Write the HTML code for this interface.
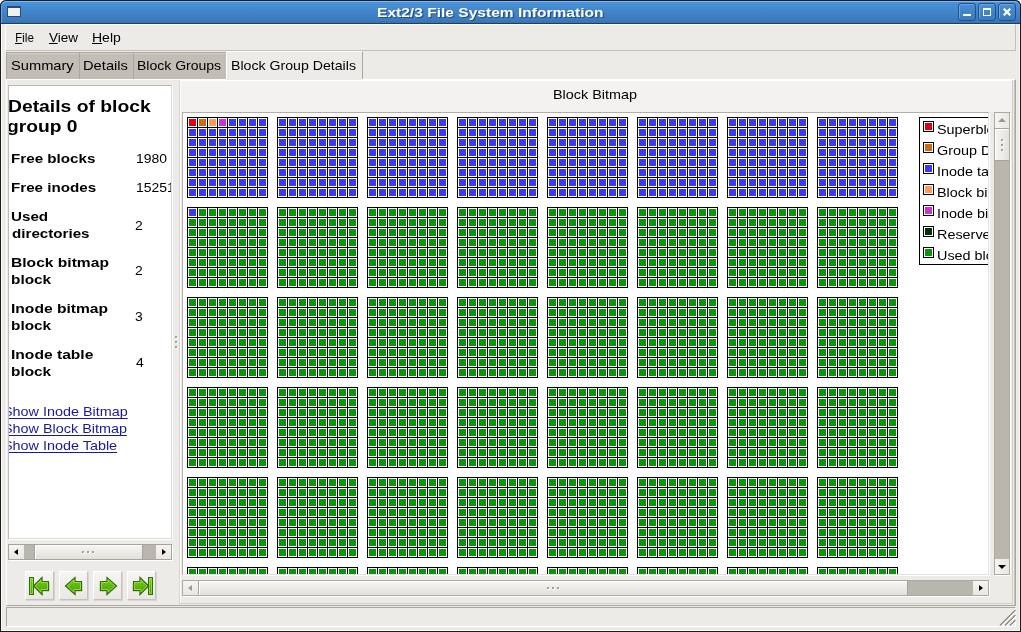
<!DOCTYPE html>
<html><head><meta charset="utf-8"><style>
*{margin:0;padding:0;box-sizing:border-box}
html,body{width:1021px;height:632px;overflow:hidden;background:#fff}
body{position:relative;font-family:"Liberation Sans",sans-serif;font-size:13px;color:#000}
.a{position:absolute}
.t{position:absolute;white-space:nowrap;line-height:1;transform-origin:0 0;will-change:transform}
u{text-decoration:underline;text-decoration-skip-ink:none}
.btn{position:absolute;width:29px;height:29px;background:linear-gradient(#f6f5f3,#e9e7e3);border:1px solid #c6c2bb;border-top-color:#fff;border-left-color:#fff;box-shadow:1px 1px 0 #d8d5cf}
.arr{position:absolute;width:0;height:0;border-style:solid;border-color:transparent}
.dot{position:absolute;width:2px;height:2px;background:#a4a098;box-shadow:1px 1px 0 #fff}
</style></head><body>
<!-- window body -->
<div class="a" style="left:0px;top:0px;width:1021px;height:632px;background:#edebe7;border-left:1px solid #1c1c1c;border-right:1px solid #1c1c1c;border-bottom:1px solid #1c1c1c;border-radius:6px 6px 0 0"></div>
<div class="a" style="left:1px;top:24px;width:1px;height:607px;background:#fbfaf9"></div>
<div class="a" style="left:1019px;top:24px;width:1px;height:607px;background:#f7f6f4"></div>
<div class="a" style="left:1px;top:630px;width:1019px;height:1px;background:#fbfaf9"></div>
<!-- title bar -->
<div class="a" style="left:0px;top:0px;width:1021px;height:24px;background:linear-gradient(#4b95dc,#4286ca 45%,#3b79bc 90%,#3a70ad);border:1px solid #0e1f38;border-bottom-color:#1f3d66;border-radius:6px 6px 0 0;box-shadow:inset 0 1px 0 #8cb4e2,inset 1px 0 0 #6ea3dc"></div>
<div class="a" style="left:7px;top:6px;width:14px;height:11px;background:#f2f0ec;border:1px solid #2a4a74;border-top-width:2px"></div>
<div class="t" style="left:376.80px;top:6px;font-size:13px;font-weight:bold;color:#fff;transform:scaleX(1.1968);text-shadow:1px 1px 0 rgba(15,35,70,0.55)">Ext2/3 File System Information</div>
<div class="a" style="left:958px;top:3px;width:18px;height:18px;border:1px solid #234f86;border-radius:3px;box-shadow:inset 1px 1px 0 #6fa5e0"></div>
<div class="a" style="left:963px;top:14px;width:8px;height:2px;background:#fff"></div>
<div class="a" style="left:978px;top:3px;width:18px;height:18px;border:1px solid #234f86;border-radius:3px;box-shadow:inset 1px 1px 0 #6fa5e0"></div>
<div class="a" style="left:983px;top:8px;width:8px;height:8px;border:1px solid #fff;border-top-width:2px"></div>
<div class="a" style="left:998px;top:3px;width:18px;height:18px;border:1px solid #234f86;border-radius:3px;box-shadow:inset 1px 1px 0 #6fa5e0"></div>
<svg class="a" style="left:1003px;top:8px" width="8" height="8"><path d="M0.7 0.7L7.3 7.3M7.3 0.7L0.7 7.3" stroke="#fff" stroke-width="2.2"/></svg>
<!-- menubar -->
<div class="a" style="left:5px;top:24px;width:1011px;height:27px;border-top:1px solid #fff;border-left:1px solid #fff;border-right:1px solid #c4c0b9;border-bottom:1px solid #c4c0b9"></div>
<div class="t" style="left:15.00px;top:31px;font-size:13px;color:#000;transform:scaleX(0.9048);"><u>F</u>ile</div><div class="t" style="left:49.00px;top:31px;font-size:13px;color:#000;transform:scaleX(1.0357);"><u>V</u>iew</div><div class="t" style="left:92.00px;top:31px;font-size:13px;color:#000;transform:scaleX(1.0769);"><u>H</u>elp</div>
<!-- tabs -->
<div class="a" style="left:6px;top:52px;width:74px;height:27px;background:#c2beb6;border:1px solid #aba79f;border-bottom:none;box-shadow:inset 0 1px 0 #d3d0ca"></div>
<div class="a" style="left:79px;top:52px;width:55px;height:27px;background:#c2beb6;border:1px solid #aba79f;border-bottom:none;box-shadow:inset 0 1px 0 #d3d0ca"></div>
<div class="a" style="left:133px;top:52px;width:94px;height:27px;background:#c2beb6;border:1px solid #aba79f;border-bottom:none;box-shadow:inset 0 1px 0 #d3d0ca"></div>
<div class="a" style="left:226px;top:51px;width:137px;height:29px;background:#edebe7;border-right:1px solid #aba79f;border-top:1px solid #fff;border-left:1px solid #fff"></div>
<div class="t" style="left:10.87px;top:59px;font-size:13px;color:#000;transform:scaleX(1.1273);">Summary</div><div class="t" style="left:82.87px;top:59px;font-size:13px;color:#000;transform:scaleX(1.1316);">Details</div><div class="t" style="left:136.92px;top:59px;font-size:13px;color:#000;transform:scaleX(1.0779);">Block Groups</div><div class="t" style="left:230.91px;top:59px;font-size:13px;color:#000;transform:scaleX(1.0877);">Block Group Details</div>
<!-- notebook page -->
<div class="a" style="left:6px;top:79px;width:1010px;height:527px;border-top:1px solid #fff;border-left:1px solid #fff;border-right:1px solid #aba79f;border-bottom:1px solid #aba79f"></div>
<div class="a" style="left:227px;top:79px;width:135px;height:1px;background:#edebe7"></div>
<!-- left pane white box -->
<div class="a" style="left:8px;top:85px;width:164px;height:454px;background:#fff;border:1px solid #bfbbb4;border-right-color:#dedbd6;border-bottom-color:#dedbd6;box-shadow:1px 1px 0 #fff"></div>
<div class="a" style="left:9px;top:86px;width:162px;height:452px;overflow:hidden">
<div class="t" style="left:-1.14px;top:12px;font-size:17px;font-weight:bold;color:#000;transform:scaleX(1.1360);">Details of block</div><div class="t" style="left:-2.13px;top:32px;font-size:17px;font-weight:bold;color:#000;transform:scaleX(1.1311);">group 0</div><div class="t" style="left:1.83px;top:66px;font-size:13px;font-weight:bold;color:#000;transform:scaleX(1.1690);">Free blocks</div><div class="t" style="left:126.93px;top:66px;font-size:13px;color:#000;transform:scaleX(1.0714);">1980</div><div class="t" style="left:1.83px;top:95px;font-size:13px;font-weight:bold;color:#000;transform:scaleX(1.1667);">Free inodes</div><div class="t" style="left:126.93px;top:95px;font-size:13px;color:#000;transform:scaleX(1.0714);">15251</div><div class="t" style="left:1.83px;top:124px;font-size:13px;font-weight:bold;color:#000;transform:scaleX(1.1667);">Used</div><div class="t" style="left:3.00px;top:141px;font-size:13px;font-weight:bold;color:#000;transform:scaleX(1.1667);">directories</div><div class="t" style="left:125.93px;top:133px;font-size:13px;color:#000;transform:scaleX(1.0714);">2</div><div class="t" style="left:1.80px;top:170px;font-size:13px;font-weight:bold;color:#000;transform:scaleX(1.2000);">Block bitmap</div><div class="t" style="left:1.82px;top:187px;font-size:13px;font-weight:bold;color:#000;transform:scaleX(1.1818);">block</div><div class="t" style="left:125.93px;top:178px;font-size:13px;color:#000;transform:scaleX(1.0714);">2</div><div class="t" style="left:1.80px;top:216px;font-size:13px;font-weight:bold;color:#000;transform:scaleX(1.2000);">Inode bitmap</div><div class="t" style="left:1.82px;top:233px;font-size:13px;font-weight:bold;color:#000;transform:scaleX(1.1818);">block</div><div class="t" style="left:125.93px;top:224px;font-size:13px;color:#000;transform:scaleX(1.0714);">3</div><div class="t" style="left:1.80px;top:262px;font-size:13px;font-weight:bold;color:#000;transform:scaleX(1.2000);">Inode table</div><div class="t" style="left:1.82px;top:279px;font-size:13px;font-weight:bold;color:#000;transform:scaleX(1.1818);">block</div><div class="t" style="left:127.00px;top:270px;font-size:13px;color:#000;transform:scaleX(1.0714);">4</div><div class="t" style="left:-6.00px;top:319px;font-size:13px;color:#1a1a98;transform:scaleX(1.1062);text-underline-offset:1.6px"><u>Show Inode Bitmap</u></div><div class="t" style="left:-6.00px;top:336px;font-size:13px;color:#1a1a98;transform:scaleX(1.1062);text-underline-offset:1.6px"><u>Show Block Bitmap</u></div><div class="t" style="left:-6.00px;top:353px;font-size:13px;color:#1a1a98;transform:scaleX(1.1062);text-underline-offset:1.6px"><u>Show Inode Table</u></div>
</div>
<!-- left h scrollbar -->
<div class="a" style="left:8px;top:544px;width:164px;height:16px;background:#b9b6ad;border:1px solid #a8a49b;box-shadow:1px 1px 0 #fff"></div>
<div class="a" style="left:9px;top:545px;width:15px;height:14px;background:linear-gradient(#f6f5f3,#e9e7e3)"></div>
<div class="arr" style="left:14px;top:549px;border-width:3.5px 4px 3.5px 0;border-right-color:#000"></div>
<div class="a" style="left:34px;top:545px;width:109px;height:14px;background:linear-gradient(#f7f6f4,#e4e1dc);border-left:1px solid #a8a49b;border-right:1px solid #a8a49b;box-shadow:inset 1px 1px 0 #fff"></div>
<div class="dot" style="left:82px;top:551px"></div><div class="dot" style="left:87px;top:551px"></div><div class="dot" style="left:92px;top:551px"></div>
<div class="a" style="left:156px;top:545px;width:15px;height:14px;background:linear-gradient(#f6f5f3,#e9e7e3)"></div>
<div class="arr" style="left:162px;top:549px;border-width:3.5px 0 3.5px 4px;border-left-color:#000"></div>
<!-- nav buttons -->
<div class="btn" style="left:25px;top:571px"><svg width="28" height="28" style="position:absolute;left:0;top:0"><defs><linearGradient id="ga" x1="0" y1="0" x2="0" y2="1"><stop offset="0" stop-color="#73d216"/><stop offset="1" stop-color="#4e9a06"/></linearGradient></defs><path d="M7.5 14 L16 5.5 L16 9.5 L22.5 9.5 L22.5 18.5 L16 18.5 L16 22.5 Z" fill="rgba(0,0,0,0.12)" transform="translate(1,1.5)"/><rect x="3.5" y="5.5" width="4" height="17" fill="url(#ga)" stroke="#336b10" stroke-width="1"/><rect x="4.5" y="6.5" width="2" height="15" fill="none" stroke="#9be44d" stroke-width="0.8"/><path d="M7.5 14 L16 5.5 L16 9.5 L22.5 9.5 L22.5 18.5 L16 18.5 L16 22.5 Z" fill="url(#ga)" stroke="#336b10" stroke-width="1.2" stroke-linejoin="miter"/><path d="M9.2 14 L15 7.8 L15 10.5 L21.5 10.5 L21.5 17.5 L15 17.5 L15 20.2 Z" fill="none" stroke="#9be44d" stroke-width="0.9" opacity="0.9"/></svg></div>
<div class="btn" style="left:59px;top:571px"><svg width="28" height="28" style="position:absolute;left:0;top:0"><defs><linearGradient id="ga" x1="0" y1="0" x2="0" y2="1"><stop offset="0" stop-color="#73d216"/><stop offset="1" stop-color="#4e9a06"/></linearGradient></defs><path d="M5.5 14 L15 5.5 L15 9.5 L21.5 9.5 L21.5 18.5 L15 18.5 L15 22.5 Z" fill="rgba(0,0,0,0.12)" transform="translate(1,1.5)"/><path d="M5.5 14 L15 5.5 L15 9.5 L21.5 9.5 L21.5 18.5 L15 18.5 L15 22.5 Z" fill="url(#ga)" stroke="#336b10" stroke-width="1.2" stroke-linejoin="miter"/><path d="M7.2 14 L14 7.8 L14 10.5 L20.5 10.5 L20.5 17.5 L14 17.5 L14 20.2 Z" fill="none" stroke="#9be44d" stroke-width="0.9" opacity="0.9"/></svg></div>
<div class="btn" style="left:93px;top:571px"><div style="position:absolute;left:0;top:0;width:28px;height:28px;transform:scaleX(-1)"><svg width="28" height="28" style="position:absolute;left:0;top:0"><defs><linearGradient id="ga" x1="0" y1="0" x2="0" y2="1"><stop offset="0" stop-color="#73d216"/><stop offset="1" stop-color="#4e9a06"/></linearGradient></defs><path d="M5.5 14 L15 5.5 L15 9.5 L21.5 9.5 L21.5 18.5 L15 18.5 L15 22.5 Z" fill="rgba(0,0,0,0.12)" transform="translate(1,1.5)"/><path d="M5.5 14 L15 5.5 L15 9.5 L21.5 9.5 L21.5 18.5 L15 18.5 L15 22.5 Z" fill="url(#ga)" stroke="#336b10" stroke-width="1.2" stroke-linejoin="miter"/><path d="M7.2 14 L14 7.8 L14 10.5 L20.5 10.5 L20.5 17.5 L14 17.5 L14 20.2 Z" fill="none" stroke="#9be44d" stroke-width="0.9" opacity="0.9"/></svg></div></div>
<div class="btn" style="left:127px;top:571px"><div style="position:absolute;left:0;top:0;width:28px;height:28px;transform:scaleX(-1)"><svg width="28" height="28" style="position:absolute;left:0;top:0"><defs><linearGradient id="ga" x1="0" y1="0" x2="0" y2="1"><stop offset="0" stop-color="#73d216"/><stop offset="1" stop-color="#4e9a06"/></linearGradient></defs><path d="M7.5 14 L16 5.5 L16 9.5 L22.5 9.5 L22.5 18.5 L16 18.5 L16 22.5 Z" fill="rgba(0,0,0,0.12)" transform="translate(1,1.5)"/><rect x="3.5" y="5.5" width="4" height="17" fill="url(#ga)" stroke="#336b10" stroke-width="1"/><rect x="4.5" y="6.5" width="2" height="15" fill="none" stroke="#9be44d" stroke-width="0.8"/><path d="M7.5 14 L16 5.5 L16 9.5 L22.5 9.5 L22.5 18.5 L16 18.5 L16 22.5 Z" fill="url(#ga)" stroke="#336b10" stroke-width="1.2" stroke-linejoin="miter"/><path d="M9.2 14 L15 7.8 L15 10.5 L21.5 10.5 L21.5 17.5 L15 17.5 L15 20.2 Z" fill="none" stroke="#9be44d" stroke-width="0.9" opacity="0.9"/></svg></div></div>
<!-- paned handle -->
<div class="dot" style="left:175px;top:336px"></div><div class="dot" style="left:175px;top:341px"></div><div class="dot" style="left:175px;top:346px"></div>
<!-- right pane frame -->
<div class="a" style="left:179px;top:80px;width:834px;height:524px;background:#edebe7;border-left:1px solid #d8d5d0;border-top:1px solid #fff;border-bottom:1px solid #d2cec8;box-shadow:inset 1px 0 0 #fff"></div>
<div class="a" style="left:181px;top:81px;width:831px;height:31px;background:#f3f2f0"></div>
<div class="a" style="left:1012px;top:80px;width:1px;height:524px;background:#d2cec8"></div>
<div class="a" style="left:1014px;top:80px;width:1px;height:525px;background:#c6c2ba"></div>
<div class="t" style="left:552.89px;top:88px;font-size:13px;color:#000;transform:scaleX(1.1067);">Block Bitmap</div>
<div class="a" style="left:182px;top:112px;width:807px;height:463px;border:1px solid #b4b0a8;border-right-color:#e4e2de;border-bottom-color:#e4e2de;background:#fff;box-shadow:1px 1px 0 #fff"></div>
<div class="a" style="left:183px;top:113px;width:805px;height:461px;overflow:hidden;background:#fff"><svg width="805" height="462" style="position:absolute;left:0;top:0" shape-rendering="crispEdges"><defs><pattern id="pb" x="4" y="4" width="10" height="10" patternUnits="userSpaceOnUse"><rect width="10" height="10" fill="#000"/><rect x="1" y="1" width="9" height="9" fill="#fff"/><rect x="2" y="2" width="7" height="7" fill="#3a3af0"/></pattern><pattern id="pg" x="4" y="4" width="10" height="10" patternUnits="userSpaceOnUse"><rect width="10" height="10" fill="#000"/><rect x="1" y="1" width="9" height="9" fill="#fff"/><rect x="2" y="2" width="7" height="7" fill="#0a960a"/></pattern></defs><rect x="4" y="4" width="81" height="81" fill="#000"/><rect x="4" y="4" width="80" height="80" fill="url(#pb)"/><rect x="94" y="4" width="81" height="81" fill="#000"/><rect x="94" y="4" width="80" height="80" fill="url(#pb)"/><rect x="184" y="4" width="81" height="81" fill="#000"/><rect x="184" y="4" width="80" height="80" fill="url(#pb)"/><rect x="274" y="4" width="81" height="81" fill="#000"/><rect x="274" y="4" width="80" height="80" fill="url(#pb)"/><rect x="364" y="4" width="81" height="81" fill="#000"/><rect x="364" y="4" width="80" height="80" fill="url(#pb)"/><rect x="454" y="4" width="81" height="81" fill="#000"/><rect x="454" y="4" width="80" height="80" fill="url(#pb)"/><rect x="544" y="4" width="81" height="81" fill="#000"/><rect x="544" y="4" width="80" height="80" fill="url(#pb)"/><rect x="634" y="4" width="81" height="81" fill="#000"/><rect x="634" y="4" width="80" height="80" fill="url(#pb)"/><rect x="4" y="94" width="81" height="81" fill="#000"/><rect x="4" y="94" width="80" height="80" fill="url(#pg)"/><rect x="94" y="94" width="81" height="81" fill="#000"/><rect x="94" y="94" width="80" height="80" fill="url(#pg)"/><rect x="184" y="94" width="81" height="81" fill="#000"/><rect x="184" y="94" width="80" height="80" fill="url(#pg)"/><rect x="274" y="94" width="81" height="81" fill="#000"/><rect x="274" y="94" width="80" height="80" fill="url(#pg)"/><rect x="364" y="94" width="81" height="81" fill="#000"/><rect x="364" y="94" width="80" height="80" fill="url(#pg)"/><rect x="454" y="94" width="81" height="81" fill="#000"/><rect x="454" y="94" width="80" height="80" fill="url(#pg)"/><rect x="544" y="94" width="81" height="81" fill="#000"/><rect x="544" y="94" width="80" height="80" fill="url(#pg)"/><rect x="634" y="94" width="81" height="81" fill="#000"/><rect x="634" y="94" width="80" height="80" fill="url(#pg)"/><rect x="4" y="184" width="81" height="81" fill="#000"/><rect x="4" y="184" width="80" height="80" fill="url(#pg)"/><rect x="94" y="184" width="81" height="81" fill="#000"/><rect x="94" y="184" width="80" height="80" fill="url(#pg)"/><rect x="184" y="184" width="81" height="81" fill="#000"/><rect x="184" y="184" width="80" height="80" fill="url(#pg)"/><rect x="274" y="184" width="81" height="81" fill="#000"/><rect x="274" y="184" width="80" height="80" fill="url(#pg)"/><rect x="364" y="184" width="81" height="81" fill="#000"/><rect x="364" y="184" width="80" height="80" fill="url(#pg)"/><rect x="454" y="184" width="81" height="81" fill="#000"/><rect x="454" y="184" width="80" height="80" fill="url(#pg)"/><rect x="544" y="184" width="81" height="81" fill="#000"/><rect x="544" y="184" width="80" height="80" fill="url(#pg)"/><rect x="634" y="184" width="81" height="81" fill="#000"/><rect x="634" y="184" width="80" height="80" fill="url(#pg)"/><rect x="4" y="274" width="81" height="81" fill="#000"/><rect x="4" y="274" width="80" height="80" fill="url(#pg)"/><rect x="94" y="274" width="81" height="81" fill="#000"/><rect x="94" y="274" width="80" height="80" fill="url(#pg)"/><rect x="184" y="274" width="81" height="81" fill="#000"/><rect x="184" y="274" width="80" height="80" fill="url(#pg)"/><rect x="274" y="274" width="81" height="81" fill="#000"/><rect x="274" y="274" width="80" height="80" fill="url(#pg)"/><rect x="364" y="274" width="81" height="81" fill="#000"/><rect x="364" y="274" width="80" height="80" fill="url(#pg)"/><rect x="454" y="274" width="81" height="81" fill="#000"/><rect x="454" y="274" width="80" height="80" fill="url(#pg)"/><rect x="544" y="274" width="81" height="81" fill="#000"/><rect x="544" y="274" width="80" height="80" fill="url(#pg)"/><rect x="634" y="274" width="81" height="81" fill="#000"/><rect x="634" y="274" width="80" height="80" fill="url(#pg)"/><rect x="4" y="364" width="81" height="81" fill="#000"/><rect x="4" y="364" width="80" height="80" fill="url(#pg)"/><rect x="94" y="364" width="81" height="81" fill="#000"/><rect x="94" y="364" width="80" height="80" fill="url(#pg)"/><rect x="184" y="364" width="81" height="81" fill="#000"/><rect x="184" y="364" width="80" height="80" fill="url(#pg)"/><rect x="274" y="364" width="81" height="81" fill="#000"/><rect x="274" y="364" width="80" height="80" fill="url(#pg)"/><rect x="364" y="364" width="81" height="81" fill="#000"/><rect x="364" y="364" width="80" height="80" fill="url(#pg)"/><rect x="454" y="364" width="81" height="81" fill="#000"/><rect x="454" y="364" width="80" height="80" fill="url(#pg)"/><rect x="544" y="364" width="81" height="81" fill="#000"/><rect x="544" y="364" width="80" height="80" fill="url(#pg)"/><rect x="634" y="364" width="81" height="81" fill="#000"/><rect x="634" y="364" width="80" height="80" fill="url(#pg)"/><rect x="4" y="454" width="81" height="81" fill="#000"/><rect x="4" y="454" width="80" height="80" fill="url(#pg)"/><rect x="94" y="454" width="81" height="81" fill="#000"/><rect x="94" y="454" width="80" height="80" fill="url(#pg)"/><rect x="184" y="454" width="81" height="81" fill="#000"/><rect x="184" y="454" width="80" height="80" fill="url(#pg)"/><rect x="274" y="454" width="81" height="81" fill="#000"/><rect x="274" y="454" width="80" height="80" fill="url(#pg)"/><rect x="364" y="454" width="81" height="81" fill="#000"/><rect x="364" y="454" width="80" height="80" fill="url(#pg)"/><rect x="454" y="454" width="81" height="81" fill="#000"/><rect x="454" y="454" width="80" height="80" fill="url(#pg)"/><rect x="544" y="454" width="81" height="81" fill="#000"/><rect x="544" y="454" width="80" height="80" fill="url(#pg)"/><rect x="634" y="454" width="81" height="81" fill="#000"/><rect x="634" y="454" width="80" height="80" fill="url(#pg)"/><rect x="6" y="6" width="7" height="7" fill="#dd0010"/><rect x="16" y="6" width="7" height="7" fill="#cc6a10"/><rect x="26" y="6" width="7" height="7" fill="#ff9a5a"/><rect x="36" y="6" width="7" height="7" fill="#cc33cc"/><rect x="6" y="96" width="7" height="7" fill="#3a3af0"/><rect x="736" y="4" width="120" height="148" fill="#000"/><rect x="737" y="5" width="118" height="146" fill="#fff"/><rect x="740" y="8" width="11" height="11" fill="#000"/><rect x="741" y="9" width="9" height="9" fill="#fff"/><rect x="742" y="10" width="7" height="7" fill="#dd0010"/><rect x="740" y="29" width="11" height="11" fill="#000"/><rect x="741" y="30" width="9" height="9" fill="#fff"/><rect x="742" y="31" width="7" height="7" fill="#cc6a10"/><rect x="740" y="50" width="11" height="11" fill="#000"/><rect x="741" y="51" width="9" height="9" fill="#fff"/><rect x="742" y="52" width="7" height="7" fill="#3a3af0"/><rect x="740" y="71" width="11" height="11" fill="#000"/><rect x="741" y="72" width="9" height="9" fill="#fff"/><rect x="742" y="73" width="7" height="7" fill="#ff9a5a"/><rect x="740" y="92" width="11" height="11" fill="#000"/><rect x="741" y="93" width="9" height="9" fill="#fff"/><rect x="742" y="94" width="7" height="7" fill="#cc33cc"/><rect x="740" y="113" width="11" height="11" fill="#000"/><rect x="741" y="114" width="9" height="9" fill="#fff"/><rect x="742" y="115" width="7" height="7" fill="#003300"/><rect x="740" y="134" width="11" height="11" fill="#000"/><rect x="741" y="135" width="9" height="9" fill="#fff"/><rect x="742" y="136" width="7" height="7" fill="#0a960a"/></svg><div class="t" style="left:753.89px;top:10px;font-size:13px;color:#000;transform:scaleX(1.1067);">Superblock</div><div class="t" style="left:753.89px;top:31px;font-size:13px;color:#000;transform:scaleX(1.1067);">Group Descriptors</div><div class="t" style="left:753.89px;top:52px;font-size:13px;color:#000;transform:scaleX(1.1067);">Inode table</div><div class="t" style="left:753.89px;top:73px;font-size:13px;color:#000;transform:scaleX(1.1067);">Block bitmap</div><div class="t" style="left:753.89px;top:94px;font-size:13px;color:#000;transform:scaleX(1.1067);">Inode bitmap</div><div class="t" style="left:753.89px;top:115px;font-size:13px;color:#000;transform:scaleX(1.1067);">Reserved GDT</div><div class="t" style="left:753.89px;top:136px;font-size:13px;color:#000;transform:scaleX(1.1067);">Used blocks</div></div>
<!-- right v scrollbar -->
<div class="a" style="left:994px;top:112px;width:16px;height:463px;background:#b9b6ad;border:1px solid #aeaaa2;box-shadow:1px 1px 0 #fff"></div>
<div class="a" style="left:995px;top:113px;width:14px;height:15px;background:linear-gradient(90deg,#f6f5f3,#e9e7e3)"></div>
<div class="arr" style="left:998px;top:118px;border-width:0 4px 4px 4px;border-bottom-color:#9d9990"></div>
<div class="a" style="left:995px;top:128px;width:14px;height:33px;background:linear-gradient(90deg,#f7f6f4,#e4e1dc);border-top:1px solid #a8a49b;border-bottom:1px solid #a8a49b;box-shadow:inset 1px 1px 0 #fff"></div>
<div class="dot" style="left:1001px;top:139px"></div><div class="dot" style="left:1001px;top:144px"></div><div class="dot" style="left:1001px;top:149px"></div>
<div class="a" style="left:995px;top:559px;width:14px;height:15px;background:linear-gradient(90deg,#f6f5f3,#e9e7e3)"></div>
<div class="arr" style="left:998px;top:565px;border-width:4px 4px 0 4px;border-top-color:#000"></div>
<!-- right h scrollbar -->
<div class="a" style="left:182px;top:580px;width:807px;height:16px;background:#b9b6ad;border:1px solid #aeaaa2;box-shadow:1px 1px 0 #fff"></div>
<div class="a" style="left:183px;top:581px;width:15px;height:14px;background:linear-gradient(#f6f5f3,#e9e7e3)"></div>
<div class="arr" style="left:188px;top:585px;border-width:3.5px 4px 3.5px 0;border-right-color:#9d9990"></div>
<div class="a" style="left:198px;top:581px;width:710px;height:14px;background:linear-gradient(#f7f6f4,#e4e1dc);border-left:1px solid #a8a49b;border-right:1px solid #a8a49b;box-shadow:inset 1px 1px 0 #fff"></div>
<div class="dot" style="left:547px;top:587px"></div><div class="dot" style="left:552px;top:587px"></div><div class="dot" style="left:557px;top:587px"></div>
<div class="a" style="left:973px;top:581px;width:15px;height:14px;background:linear-gradient(#f6f5f3,#e9e7e3)"></div>
<div class="arr" style="left:979px;top:585px;border-width:3.5px 0 3.5px 4px;border-left-color:#000"></div>
<!-- status bar -->
<div class="a" style="left:6px;top:607px;width:1010px;height:20px;border:1px solid #aca89f;border-right-color:#fff;border-bottom-color:#fff"></div>
<svg class="a" style="left:999px;top:609px" width="17" height="17"><path d="M1 16.5L16.5 1M6 16.5L16.5 6M11 16.5L16.5 11" stroke="#8a867e" stroke-width="1.3"/><path d="M2.2 17L17 2.2M7.2 17L17 7.2M12.2 17L17 12.2" stroke="#fff" stroke-width="0.9"/></svg>
</body></html>
